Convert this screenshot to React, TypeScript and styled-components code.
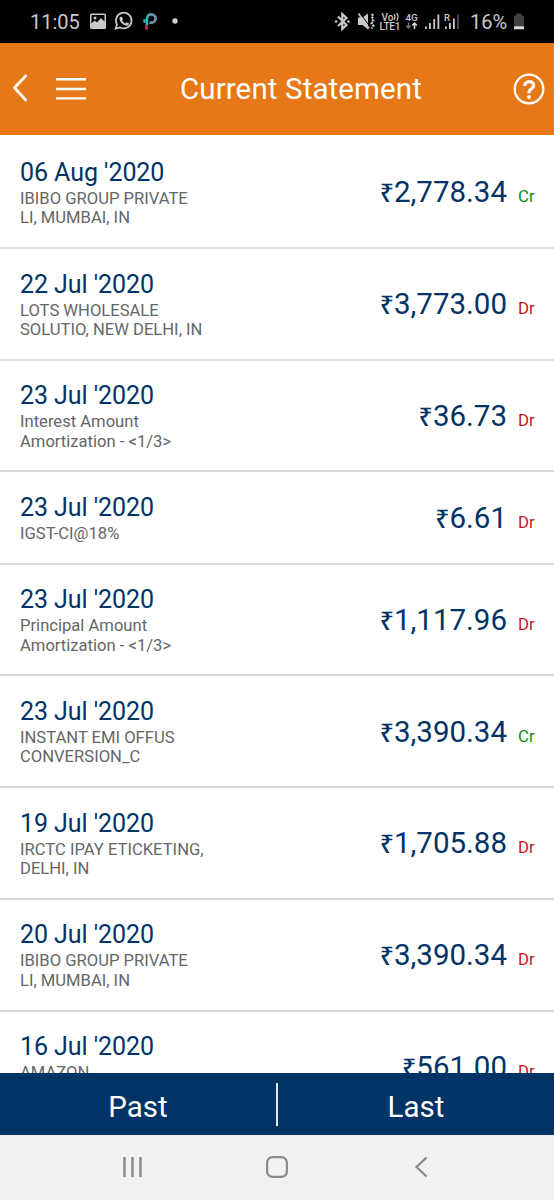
import React from "react";
import styled, { createGlobalStyle } from "styled-components";

const GlobalStyle = createGlobalStyle`
  * { box-sizing: border-box; }
  body {
    margin: 0;
    background: #fff;
    font-family: Roboto, "Noto Sans", sans-serif;
  }
`;

const Screen = styled.main`
  display: flex;
  flex-direction: column;
  width: 554px;
  height: 1200px;
  overflow: hidden;
  background: #fff;
`;

const StatusBar = styled.div`
  flex: none;
  display: flex;
  justify-content: space-between;
  height: 42.5px;
  padding: 0 29px 0 30px;
  background: #000;
  color: #c9c9c9;
`;

const StatusGroup = styled.div`
  display: flex;
  align-items: center;
`;

const StatusText = styled.span<{ $width: number }>`
  width: ${(p) => p.$width}px;
  font-size: 20px;
  line-height: 42px;
  padding-top: 2px;
  white-space: nowrap;
`;

const Header = styled.header`
  flex: none;
  display: grid;
  grid-template-columns: 102px 1fr 62px;
  align-items: center;
  height: 92.5px;
  background: #e67817;
  color: #fff;
`;

const HeaderTitle = styled.h1`
  margin: 0;
  padding: 0 0 0 8px;
  font-size: 29.5px;
  line-height: 40px;
  font-weight: 400;
  letter-spacing: 0.12px;
  white-space: nowrap;
  text-align: center;
`;

const IconButton = styled.button`
  display: flex;
  padding: 0;
  border: 0;
  background: none;
  color: inherit;
`;

const HeaderActions = styled.div<{ $end?: boolean }>`
  display: flex;
  align-items: center;
  justify-content: ${(p) => (p.$end ? "flex-end" : "flex-start")};
  gap: 28px;
  padding: ${(p) => (p.$end ? "0 9px 0 0" : "0 0 2px 12px")};
`;

const List = styled.ul`
  flex: 1;
  min-height: 0;
  margin: 0;
  padding: 2.2px 0 0;
  list-style: none;
  overflow: hidden;
`;

const Row = styled.li`
  display: flex;
  justify-content: space-between;
  align-items: center;
  padding: 18.6px 19px 19.15px 20px;
  border-bottom: 2px solid #dadada;
`;

const Details = styled.div`
  width: 210px;
`;

const DateText = styled.div`
  font-size: 25px;
  line-height: 33px;
  letter-spacing: -0.06px;
  color: #003366;
`;

const Description = styled.div`
  font-size: 16.6px;
  line-height: 19.5px;
  color: #666;
  white-space: pre-line;
`;

const AmountGroup = styled.div`
  display: flex;
  align-items: baseline;
  padding-top: 1.1px;
`;

const Rupee = styled.span`
  font-family: "Noto Sans", sans-serif;
  font-size: 25px;
  font-weight: 500;
`;

const Amount = styled.span`
  font-size: 29.5px;
  line-height: 40px;
  color: #003366;
`;

const Kind = styled.span<{ $credit: boolean }>`
  width: 17px;
  margin-left: 11px;
  font-size: 16.8px;
  white-space: nowrap;
  color: ${(p) => (p.$credit ? "#138a13" : "#c4161c")};
`;

const Tabs = styled.nav`
  flex: none;
  display: grid;
  grid-template-columns: 1fr 2px 1fr;
  align-items: center;
  height: 62px;
  background: #003366;
`;

const Tab = styled.button`
  padding: 6px 0 0;
  border: 0;
  background: none;
  color: #fff;
  font: 400 29.5px/40px Roboto, sans-serif;
`;

const TabDivider = styled.span`
  height: 43px;
  background: #dfe6ee;
`;

const SystemNav = styled.div`
  flex: none;
  display: flex;
  align-items: center;
  justify-content: center;
  gap: 121px;
  height: 65px;
  padding-bottom: 1px;
  background: #f1f1f1;
`;

type Entry = { date: string; text: string; amount: string; credit?: boolean };

const entries: Entry[] = [
  { date: "06 Aug '2020", text: "IBIBO GROUP PRIVATE\nLI, MUMBAI, IN", amount: "2,778.34", credit: true },
  { date: "22 Jul '2020", text: "LOTS WHOLESALE\nSOLUTIO, NEW DELHI, IN", amount: "3,773.00" },
  { date: "23 Jul '2020", text: "Interest Amount\nAmortization - <1/3>", amount: "36.73" },
  { date: "23 Jul '2020", text: "IGST-CI@18%", amount: "6.61" },
  { date: "23 Jul '2020", text: "Principal Amount\nAmortization - <1/3>", amount: "1,117.96" },
  { date: "23 Jul '2020", text: "INSTANT EMI OFFUS\nCONVERSION_C", amount: "3,390.34", credit: true },
  { date: "19 Jul '2020", text: "IRCTC IPAY ETICKETING,\nDELHI, IN", amount: "1,705.88" },
  { date: "20 Jul '2020", text: "IBIBO GROUP PRIVATE\nLI, MUMBAI, IN", amount: "3,390.34" },
  { date: "16 Jul '2020", text: "AMAZON\nMUMBAI, IN", amount: "561.00" },
];

const NotificationIcons = () => (
  <svg width="95" height="42" viewBox="85 0 95 42" fill="none">
    <path fill="#c9c9c9" fillRule="evenodd" d="M91.500 13.500h13a1.500 1.500 0 0 1 1.500 1.500v12.500a1.500 1.500 0 0 1-1.500 1.500h-13a1.500 1.500 0 0 1-1.500-1.500v-12.500a1.500 1.500 0 0 1 1.500-1.500Zm0 1.500v8.500l3-3 2.500 2 4-4.500 3.500 3.500v-6.500Z" />
    <circle cx="95" cy="18" r="1.500" fill="#c9c9c9" />
    <path stroke="#c9c9c9" strokeWidth="1.700" d="M115.700 28.700l1.300-4.200a7.800 7.800 0 1 1 3 2.900Z" />
    <path fill="#c9c9c9" d="M120.200 17l1.400-.6 1.500 2.900-.9 1.100c.8 1.500 1.700 2.400 3.100 3l1.200-1.200 2.600 1.400c-.2 1.700-1.700 2.300-3 2-3.700-.8-6.500-4-6.600-6.800 0-.7.200-1.300.7-1.800Z" />
    <path stroke="#27b7b0" strokeWidth="2.600" d="M150.500 14.500c-3 .3-3.600 2.500-3.600 5.500v6" />
    <path stroke="#6d8fa6" strokeWidth="2.800" d="M149 14.800c4-1.200 6.800.8 6.600 3.900-.2 3.200-3 4.700-6.100 3.500" />
    <path stroke="#25a9b5" strokeWidth="2.200" d="M144.500 19v4" />
    <path stroke="#b41d63" strokeWidth="3" d="M146.500 25v4.500" />
    <circle cx="175" cy="21" r="2.700" fill="#d2d2d2" />
  </svg>
);

const SignalIcons = () => (
  <svg width="137" height="42" viewBox="333 0 137 42" fill="#c9c9c9" fontFamily="Roboto" fontWeight="500">
    <path d="M338 16.500l8.500 8.500-4.200 4v-15l4.200 4-8.500 8" fill="none" stroke="#c9c9c9" strokeWidth="2.200" />
    <circle cx="336.200" cy="21.500" r="1.300" />
    <circle cx="348.500" cy="21.500" r="1.300" />
    <path d="M358 17.500h4.500l5.500-4v16l-5.500-4.500h-4.500Z" />
    <path d="M360 13l9.500 13" stroke="#000" strokeWidth="1" />
    <path d="M358.500 13.500l10.500 15" stroke="#c9c9c9" strokeWidth="1.700" />
    <path d="M371.500 14l2 2-2 2.500 2 2.500-2 2.500 2 2.500-2 2.500" fill="none" stroke="#c9c9c9" strokeWidth="2" strokeDasharray="2.500 1" />
    <text x="381.500" y="20.500" fontSize="10">Vo</text>
    <path d="M394 14q2 3 0 6M396.700 13q2.500 4 0 8" fill="none" stroke="#c9c9c9" strokeWidth="1.200" />
    <text x="379.500" y="29.500" fontSize="10" textLength="21">LTE1</text>
    <text x="405.500" y="20.500" fontSize="9.800">4G</text>
    <path d="M408.500 22.500v5.500m-2.200-2.300l2.200 2.300 2.200-2.300" fill="none" stroke="#777" strokeWidth="1.400" />
    <path d="M414.500 29v-6m-2.300 2.500l2.300-2.500 2.300 2.500" fill="none" stroke="#ddd" strokeWidth="1.500" />
    <path d="M425 26.500h1.800v2.500H425ZM429 23h1.800v6H429ZM433.300 19h1.800v10h-1.800ZM437.500 14.500h1.800v14.500h-1.800ZM445 26.500h1.800v2.500H445ZM449 23h1.800v6H449ZM453 18.500h1.800v10.500H453Z" />
    <path d="M457.200 14.500h1.600v14.500h-1.600Z" fill="#555" />
    <text x="444" y="20.500" fontSize="9.500">R</text>
  </svg>
);

const BatteryIcon = () => (
  <svg width="12" height="42" viewBox="0 0 12 42">
    <path d="M3.500 13.500h5v2h2.500v13.500h-10v-13.500h2.500Z" fill="#414141" />
    <path d="M1 26.300h10v3h-10Z" fill="#d8d8d8" />
  </svg>
);

const BackIcon = () => (
  <svg width="16" height="30" viewBox="0 0 16 30" fill="none" stroke="#fff" strokeWidth="2.800" strokeLinecap="round" strokeLinejoin="round">
    <path d="M13.700 3L2.500 14.800 13.700 27" />
  </svg>
);

const MenuIcon = () => (
  <svg width="30" height="24" viewBox="0 0 30 24" fill="#fff">
    <path d="M0 2h30v2.400H0ZM0 11.800h30v2.400H0ZM0 21.200h30v2.400H0Z" />
  </svg>
);

const HelpIcon = () => (
  <svg width="32" height="32" viewBox="0 0 32 32" fill="none" stroke="#fff">
    <circle cx="16" cy="16" r="14.300" strokeWidth="2.300" />
    <path d="M11.700 13c0-5.700 9-5.600 9-.7 0 3.400-4.700 3.700-4.700 7v1" strokeWidth="3.200" />
    <circle cx="16" cy="24" r="1.900" fill="#fff" stroke="none" />
  </svg>
);

export default function App() {
  return (
    <>
      <GlobalStyle />
      <Screen>
        <StatusBar>
          <StatusGroup>
            <StatusText $width={55}>11:05</StatusText>
            <NotificationIcons />
          </StatusGroup>
          <StatusGroup>
            <SignalIcons />
            <StatusText $width={43}>16%</StatusText>
            <BatteryIcon />
          </StatusGroup>
        </StatusBar>
        <Header>
          <HeaderActions>
            <IconButton aria-label="Back"><BackIcon /></IconButton>
            <IconButton aria-label="Menu"><MenuIcon /></IconButton>
          </HeaderActions>
          <HeaderTitle>Current Statement</HeaderTitle>
          <HeaderActions $end>
            <IconButton aria-label="Help"><HelpIcon /></IconButton>
          </HeaderActions>
        </Header>
        <List>
          {entries.map((e, i) => (
            <Row key={i}>
              <Details>
                <DateText>{e.date}</DateText>
                <Description>{e.text}</Description>
              </Details>
              <AmountGroup>
                <Amount><Rupee>₹</Rupee>{e.amount}</Amount>
                <Kind $credit={!!e.credit}>{e.credit ? "Cr" : "Dr"}</Kind>
              </AmountGroup>
            </Row>
          ))}
        </List>
        <Tabs>
          <Tab>Past</Tab>
          <TabDivider />
          <Tab>Last</Tab>
        </Tabs>
        <SystemNav>
          <svg width="22" height="22" viewBox="0 0 22 22" stroke="#8a8a8a" strokeWidth="2.400">
            <path d="M2.500 1v20M10.500 1v20M18.500 1v20" />
          </svg>
          <svg width="24" height="24" viewBox="0 0 24 24" fill="none" stroke="#8a8a8a" strokeWidth="2.200">
            <rect x="2.100" y="2.100" width="19.800" height="19.800" rx="5.500" />
          </svg>
          <svg width="22" height="22" viewBox="0 0 22 22" fill="none" stroke="#8a8a8a" strokeWidth="2.200">
            <path d="M16.500 1.500L6.500 11l10 9.500" />
          </svg>
        </SystemNav>
      </Screen>
    </>
  );
}
